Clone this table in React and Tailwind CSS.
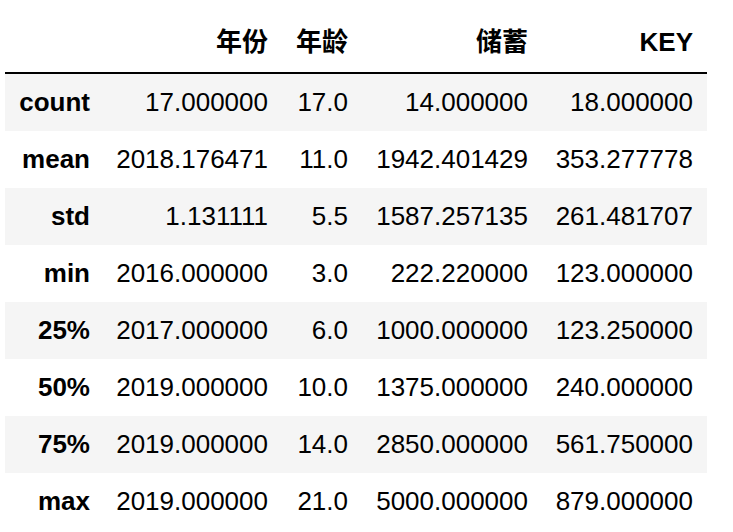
const columns = ["年份", "年龄", "储蓄", "KEY"];

const rows = [
  ["count", "17.000000", "17.0", "14.000000", "18.000000"],
  ["mean", "2018.176471", "11.0", "1942.401429", "353.277778"],
  ["std", "1.131111", "5.5", "1587.257135", "261.481707"],
  ["min", "2016.000000", "3.0", "222.220000", "123.000000"],
  ["25%", "2017.000000", "6.0", "1000.000000", "123.250000"],
  ["50%", "2019.000000", "10.0", "1375.000000", "240.000000"],
  ["75%", "2019.000000", "14.0", "2850.000000", "561.750000"],
  ["max", "2019.000000", "21.0", "5000.000000", "879.000000"],
];

const grid = "grid grid-cols-[99px_178px_80px_180px_165px]";

function App() {
  return (
    <div className="w-[733px] h-[532px] overflow-hidden bg-white text-black font-['Liberation_Sans','Noto_Sans_CJK_SC',sans-serif] text-[26px]">
      <div className="ml-[5px] mt-[14px] w-[702px]">
        {/* header */}
        <div className={`${grid} h-[60px] border-b-2 border-black font-bold`}>
          <div />
          {columns.map((c) => (
            <div key={c} className="flex items-center justify-end px-[14px] pb-[2px]">
              {c}
            </div>
          ))}
        </div>
        {/* body */}
        {rows.map((r, i) => (
          <div
            key={r[0]}
            className={`${grid} h-[57px] ${i % 2 === 0 ? "bg-[#f5f5f5]" : "bg-white"}`}
          >
            {r.map((cell, j) => (
              <div
                key={j}
                className={`flex items-center justify-end px-[14px] ${j === 0 ? "font-bold" : ""}`}
              >
                {cell}
              </div>
            ))}
          </div>
        ))}
      </div>
    </div>
  );
}

export default App;
